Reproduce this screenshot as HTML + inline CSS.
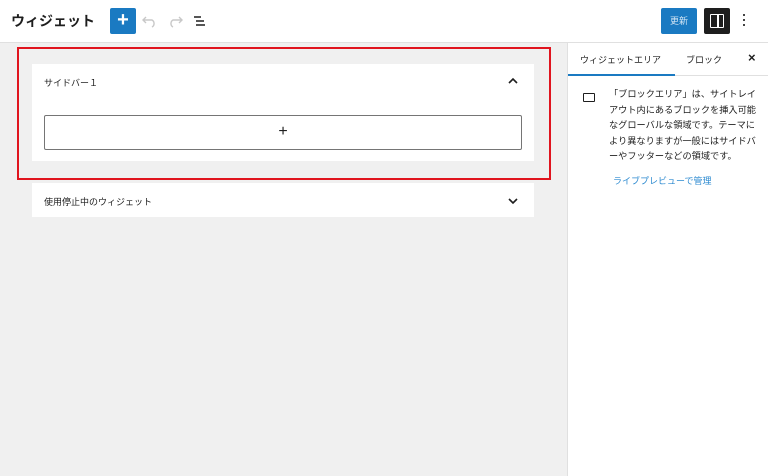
<!DOCTYPE html>
<html><head><meta charset="utf-8"><style>
*{box-sizing:border-box;margin:0;padding:0}
body{width:768px;height:476px;overflow:hidden;background:#f0f0f0;font-family:"Liberation Sans","Noto Sans CJK JP",sans-serif;color:#1e1e1e;position:relative}
.hdr{position:absolute;left:0;top:0;width:768px;height:43px;background:#fff;border-bottom:1px solid #e0e0e0}
.abs{position:absolute}
.side{position:absolute;left:567px;top:43px;width:201px;height:433px;background:#fff;border-left:1px solid #e0e0e0}
.card{position:absolute;left:32px;width:502px;background:#fff}
</style></head><body>
<div class="hdr">
<div class="abs" style="left:11px;top:11px;font-size:14px;font-weight:bold;white-space:nowrap">ウィジェット</div>
<div class="abs" style="left:110px;top:8px;width:26px;height:26px;background:#1a7ac2;border-radius:2px;color:#fff;font-size:20px;line-height:25px;text-align:center;font-weight:bold">+</div>
<svg class="abs" style="left:141px;top:12px" width="18" height="18" viewBox="0 0 18 18"><path d="M5 5L2 8l3 3M2 8h9a4 4 0 0 1 0 7" fill="none" stroke="#c8c8c8" stroke-width="1.4"/></svg>
<svg class="abs" style="left:166px;top:12px" width="18" height="18" viewBox="0 0 18 18"><path d="M13 5l3 3-3 3M16 8H7a4 4 0 0 0 0 7" fill="none" stroke="#c8c8c8" stroke-width="1.4"/></svg>
<svg class="abs" style="left:192px;top:13px" width="16" height="16" viewBox="0 0 16 16"><path d="M2 4h7M4 8h8M4 12h9" stroke="#1e1e1e" stroke-width="1.6"/></svg>
<div class="abs" style="left:661px;top:8px;width:36px;height:26px;background:#1a7ac2;border-radius:2px;color:#cfe3f3;font-size:9px;line-height:26px;text-align:center">更新</div>
<div class="abs" style="left:704px;top:8px;width:26px;height:26px;background:#1e1e1e;border-radius:2px"></div>
<div class="abs" style="left:710px;top:14px;width:14px;height:14px;border:1.6px solid #fff;border-radius:1px"></div>
<div class="abs" style="left:717px;top:14px;width:1.6px;height:14px;background:#fff"></div>
<div class="abs" style="left:743px;top:14px;width:2px;height:2px;background:#444;box-shadow:0 5px #444,0 10px #444"></div>
</div>
<div class="abs" style="left:17px;top:47px;width:534px;height:133px;border:2px solid #e0141e"></div>
<div class="card" style="top:64px;height:97px">
<div class="abs" style="left:12px;top:12px;font-size:9px">サイドバー１</div>
<svg class="abs" style="left:475px;top:12px" width="12" height="10" viewBox="0 0 12 10"><path d="M2 7l4-4 4 4" fill="none" stroke="#1e1e1e" stroke-width="1.6"/></svg>
<div class="abs" style="left:12px;top:51px;width:478px;height:35px;border:1px solid #757575;border-radius:2px;text-align:center;font-size:16px;line-height:32px">+</div>
</div>
<div class="card" style="top:183px;height:34px">
<div class="abs" style="left:12px;top:12px;font-size:9px">使用停止中のウィジェット</div>
<svg class="abs" style="left:475px;top:13px" width="12" height="10" viewBox="0 0 12 10"><path d="M2 3l4 4 4-4" fill="none" stroke="#1e1e1e" stroke-width="1.6"/></svg>
</div>
<div class="side">
<div class="abs" style="left:0;top:0;width:200px;height:33px;border-bottom:1px solid #e0e0e0"></div>
<div class="abs" style="left:12px;top:10px;font-size:9px">ウィジェットエリア</div>
<div class="abs" style="left:0;top:31px;width:107px;height:2px;background:#1a7ac2"></div>
<div class="abs" style="left:118px;top:10px;font-size:9px">ブロック</div>
<div class="abs" style="left:180px;top:7px;font-size:13px;font-weight:bold">×</div>
<div class="abs" style="left:15px;top:50px;width:12px;height:9px;border:1.5px solid #1e1e1e;border-radius:1px"></div>
<div class="abs" style="left:41px;top:44px;width:160px;font-size:9.2px;line-height:15.5px;white-space:nowrap">「ブロックエリア」は、サイトレイ<br>アウト内にあるブロックを挿入可能<br>なグローバルな領域です。テーマに<br>より異なりますが一般にはサイドバ<br>ーやフッターなどの領域です。</div>
<div class="abs" style="left:45px;top:131px;font-size:9px;color:#2c8ad0">ライブプレビューで管理</div>
</div>
</body></html>
